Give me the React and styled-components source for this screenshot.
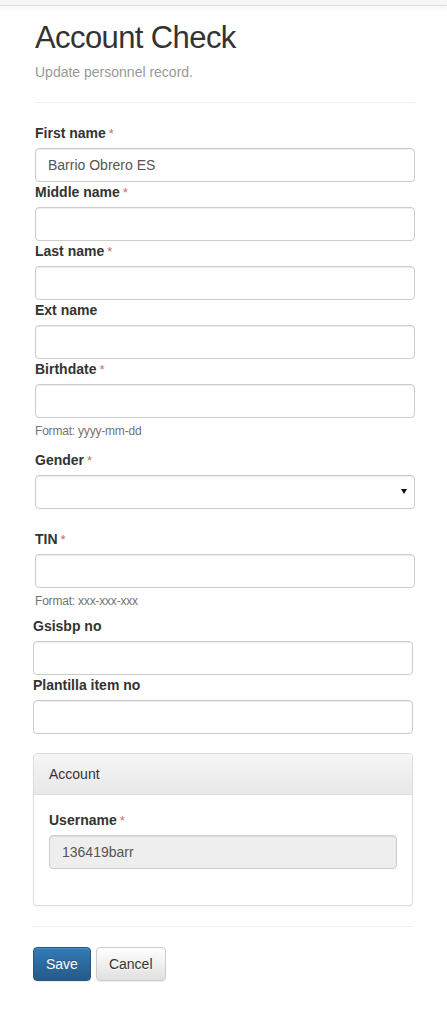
import React from "react";
import styled, { createGlobalStyle } from "styled-components";

const GlobalStyle = createGlobalStyle`
  html, body {
    margin: 0;
    padding: 0;
    background: #fff;
  }
  body {
    font-family: "Liberation Sans", Arial, sans-serif;
    font-size: 14px;
    line-height: 20px;
    color: #333;
  }
  * { box-sizing: border-box; }
`;

const TopBar = styled.div`
  height: 6px;
  background: #f6f6f6;
  border-bottom: 1px solid #dedede;
  box-shadow: 0 2px 6px rgba(0, 0, 0, 0.05);
`;

const Page = styled.div`
  width: 380px;
  margin-left: 33px;
  padding-bottom: 37px;
`;

const Header = styled.div`
  padding-left: 2px;
  margin-top: 15px;
`;

const Title = styled.h1`
  margin: 0;
  font-size: 31px;
  line-height: 33px;
  font-weight: 400;
  letter-spacing: -0.6px;
  color: #333;
`;

const Subtitle = styled.p`
  margin: 8px 0 0;
  color: #999;
  font-size: 14px;
  line-height: 20px;
`;

const Divider = styled.hr`
  border: 0;
  border-top: 1px solid #eee;
  height: 0;
  margin: ${(p) => p.$margin};
  margin-left: ${(p) => (p.$inset ? "2px" : "0")};
  width: 380px;
`;

const Group = styled.div`
  margin-left: ${(p) => (p.$inset ? "2px" : "0")};
  margin-right: ${(p) => (p.$inset ? "-2px" : "0")};
  margin-bottom: ${(p) => p.$after || "0"};
`;

const Label = styled.label`
  display: block;
  height: 20px;
  font-weight: 700;
  margin-bottom: 5px;
  line-height: 20px;
`;

const Star = styled.span`
  font-weight: 400;
  font-size: 13px;
  line-height: 1;
  color: #c07070;
  margin-left: 3px;
`;

const Input = styled.input`
  display: block;
  width: 100%;
  height: 34px;
  padding: 6px 12px;
  font-family: inherit;
  font-size: 14px;
  line-height: 20px;
  color: #555;
  background: ${(p) => (p.disabled ? "#eee" : "#fff")};
  border: 1px solid #ccc;
  border-radius: 4px;
  box-shadow: inset 0 1px 1px rgba(0, 0, 0, 0.075);
  outline: none;
  margin: 0;
  opacity: 1;
  -webkit-text-fill-color: #555;
`;

const SelectWrap = styled.div`
  position: relative;
`;

const Select = styled.select`
  display: block;
  width: 100%;
  height: 34px;
  padding: 6px 12px;
  font-family: inherit;
  font-size: 14px;
  color: #555;
  background: #fff;
  border: 1px solid #ccc;
  border-radius: 4px;
  box-shadow: inset 0 1px 1px rgba(0, 0, 0, 0.075);
  appearance: none;
  -webkit-appearance: none;
  outline: none;
  margin: 0;
`;

const Caret = styled.svg`
  position: absolute;
  right: 8px;
  top: 14px;
  pointer-events: none;
`;

const Help = styled.span`
  display: block;
  margin: 5px 0 ${(p) => p.$after};
  font-size: 12px;
  line-height: 17px;
  color: #737373;
  letter-spacing: -0.2px;
`;

const Panel = styled.div`
  margin-top: 19px;
  border: 1px solid #ddd;
  border-radius: 4px;
  background: #fff;
  box-shadow: 0 1px 2px rgba(0, 0, 0, 0.05);
  overflow: hidden;
`;

const PanelHeading = styled.div`
  padding: 10px 15px;
  line-height: 20px;
  color: #333;
  border-bottom: 1px solid #ddd;
  background: linear-gradient(to bottom, #f5f5f5 0%, #e8e8e8 100%);
`;

const PanelBody = styled.div`
  padding: 15px;
`;

const Actions = styled.div`
  display: flex;
  gap: 5px;
`;

const Button = styled.button`
  height: 34px;
  padding: 6px 12px;
  font-family: inherit;
  font-size: 14px;
  line-height: 20px;
  border-radius: 4px;
  cursor: pointer;
  ${(p) =>
    p.$primary
      ? `
    color: #fff;
    border: 1px solid #245580;
    background: linear-gradient(to bottom, #337ab7 0%, #265a88 100%);
    text-shadow: 0 -1px 0 rgba(0, 0, 0, 0.2);
    box-shadow: inset 0 1px 0 rgba(255, 255, 255, 0.15), 0 1px 1px rgba(0, 0, 0, 0.075);
  `
      : `
    color: #333;
    border: 1px solid #ccc;
    background: linear-gradient(to bottom, #fff 0%, #e0e0e0 100%);
    text-shadow: 0 1px 0 #fff;
    box-shadow: inset 0 1px 0 rgba(255, 255, 255, 0.15), 0 1px 1px rgba(0, 0, 0, 0.075);
  `}
`;

function Field({ label, required, value = "", inset, disabled }) {
  return (
    <Group $inset={inset}>
      <Label>
        {label}
        {required && <Star>*</Star>}
      </Label>
      <Input defaultValue={value} disabled={disabled} readOnly />
    </Group>
  );
}

export default function App() {
  return (
    <>
      <GlobalStyle />
      <TopBar />
      <Page>
        <Header>
          <Title>Account Check</Title>
          <Subtitle>Update personnel record.</Subtitle>
        </Header>
        <Divider $inset $margin="20px 0 20px" />

        <Field inset label="First name" required value="Barrio Obrero ES" />
        <Field inset label="Middle name" required />
        <Field inset label="Last name" required />
        <Field inset label="Ext name" />
        <Field inset label="Birthdate" required />
        <Group $inset>
          <Help $after="10px">Format: yyyy-mm-dd</Help>
        </Group>

        <Group $inset $after="20px">
          <Label>
            Gender<Star>*</Star>
          </Label>
          <SelectWrap>
            <Select defaultValue="">
              <option value=""></option>
              <option value="M">Male</option>
              <option value="F">Female</option>
            </Select>
            <Caret width="6" height="5" viewBox="0 0 6 5">
              <path d="M0 0 L6 0 L3 5 Z" fill="#111" />
            </Caret>
          </SelectWrap>
        </Group>

        <Field inset label="TIN" required />
        <Group $inset>
          <Help $after="6px">Format: xxx-xxx-xxx</Help>
        </Group>

        <Field label="Gsisbp no" />
        <Field label="Plantilla item no" />

        <Panel>
          <PanelHeading>Account</PanelHeading>
          <PanelBody>
            <Group $after="21px">
              <Label>
                Username<Star>*</Star>
              </Label>
              <Input defaultValue="136419barr" disabled />
            </Group>
          </PanelBody>
        </Panel>

        <Divider $margin="20px 0" />

        <Actions>
          <Button $primary>Save</Button>
          <Button>Cancel</Button>
        </Actions>
      </Page>
    </>
  );
}
